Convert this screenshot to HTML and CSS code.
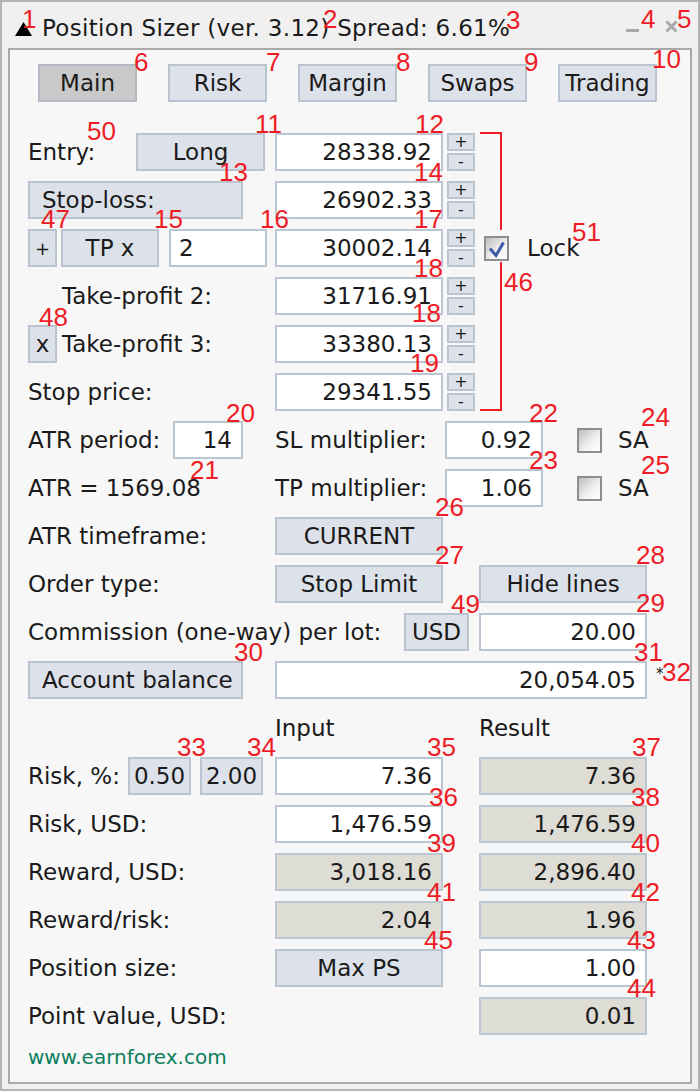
FILE: index.html
```html
<!DOCTYPE html>
<html lang="en">

<head>
    <meta charset="UTF-8">
    <meta name="viewport" content="width=device-width, initial-scale=1.0">
    <title>Position Sizer</title>
    <link rel="stylesheet" href="styles.css">
</head>

<body>

    <div class="window">
        <div class="titlebar">
            <svg class="tri" width="17" height="14" viewBox="0 0 17 14"><polygon points="8.5,0 17,14 0,14" fill="#000"/></svg>
            <span class="title">Position Sizer (ver. 3.12) Spread: 6.61%</span>
            <svg class="min" width="13" height="3"><rect width="13" height="3" fill="#a8a8a8"/></svg>
            <svg class="close" width="13" height="13" viewBox="0 0 13 13"><path d="M1.5 1.5 L11.5 11.5 M11.5 1.5 L1.5 11.5" stroke="#a8a8a8" stroke-width="3"/></svg>
        </div>

        <div class="panel">
            <div class="tabs">
                <button class="tab active">Main</button>
                <button class="tab">Risk</button>
                <button class="tab">Margin</button>
                <button class="tab">Swaps</button>
                <button class="tab">Trading</button>
            </div>

            <div class="row">
                <div class="lc"><span class="lbl">Entry:</span><button class="btn long">Long</button></div>
                <input class="inp fld" value="28338.92">
                <div class="spin"><button>+</button><button>-</button></div>
            </div>

            <div class="row">
                <div class="lc"><button class="btn sl">Stop-loss:</button></div>
                <input class="inp fld" value="26902.33">
                <div class="spin"><button>+</button><button>-</button></div>
            </div>

            <div class="row">
                <div class="lc">
                    <button class="btn sq plus">+</button>
                    <button class="btn tpx">TP x</button>
                    <input class="inp mult" value="2">
                </div>
                <input class="inp fld" value="30002.14">
                <div class="spin"><button>+</button><button>-</button></div>
                <div class="lock">
                    <span class="chk"><svg width="21" height="21" viewBox="0 0 21 21"><path d="M4 10.5 L10 17.5 L17.5 4.5" stroke="#3d5bab" stroke-width="3" fill="none"/></svg></span>
                    <span class="lbl">Lock</span>
                </div>
            </div>

            <div class="row">
                <div class="lc"><span class="lbl ind">Take-profit 2:</span></div>
                <input class="inp fld" value="31716.91">
                <div class="spin"><button>+</button><button>-</button></div>
            </div>

            <div class="row">
                <div class="lc"><button class="btn sq">x</button><span class="lbl tp3">Take-profit 3:</span></div>
                <input class="inp fld" value="33380.13">
                <div class="spin"><button>+</button><button>-</button></div>
            </div>

            <div class="row">
                <div class="lc"><span class="lbl">Stop price:</span></div>
                <input class="inp fld" value="29341.55">
                <div class="spin"><button>+</button><button>-</button></div>
            </div>

            <div class="row">
                <div class="lc"><span class="lbl">ATR period:</span><input class="inp atr" value="14"></div>
                <span class="lbl mlbl">SL multiplier:</span>
                <input class="inp small" value="0.92">
                <span class="chk sa"></span><span class="lbl satxt">SA</span>
            </div>

            <div class="row">
                <div class="lc"><span class="lbl">ATR = 1569.08</span></div>
                <span class="lbl mlbl">TP multiplier:</span>
                <input class="inp small" value="1.06">
                <span class="chk sa"></span><span class="lbl satxt">SA</span>
            </div>

            <div class="row">
                <div class="lc"><span class="lbl">ATR timeframe:</span></div>
                <button class="btn fld">CURRENT</button>
            </div>

            <div class="row">
                <div class="lc"><span class="lbl">Order type:</span></div>
                <button class="btn fld">Stop Limit</button>
                <button class="btn rc">Hide lines</button>
            </div>

            <div class="row">
                <div class="lcw"><span class="lbl">Commission (one-way) per lot:</span><button class="btn usd">USD</button></div>
                <input class="inp rc" value="20.00">
            </div>

            <div class="row">
                <div class="lc"><button class="btn sl">Account balance</button></div>
                <input class="inp wide" value="20,054.05">
                <span class="star">*</span>
            </div>

            <div class="row">
                <span class="colh first">Input</span>
                <span class="colh">Result</span>
            </div>

            <div class="row">
                <div class="lc">
                    <span class="lbl">Risk, %:</span>
                    <button class="btn q">0.50</button>
                    <button class="btn q">2.00</button>
                </div>
                <input class="inp fld" value="7.36">
                <input class="inp rc ro" value="7.36" readonly>
            </div>

            <div class="row">
                <div class="lc"><span class="lbl">Risk, USD:</span></div>
                <input class="inp fld" value="1,476.59">
                <input class="inp rc ro" value="1,476.59" readonly>
            </div>

            <div class="row">
                <div class="lc"><span class="lbl">Reward, USD:</span></div>
                <input class="inp fld ro" value="3,018.16" readonly>
                <input class="inp rc ro" value="2,896.40" readonly>
            </div>

            <div class="row">
                <div class="lc"><span class="lbl">Reward/risk:</span></div>
                <input class="inp fld ro" value="2.04" readonly>
                <input class="inp rc ro" value="1.96" readonly>
            </div>

            <div class="row">
                <div class="lc"><span class="lbl">Position size:</span></div>
                <button class="btn fld">Max PS</button>
                <input class="inp rc" value="1.00">
            </div>

            <div class="row">
                <div class="lc"><span class="lbl">Point value, USD:</span></div>
                <span class="fld"></span>
                <input class="inp rc ro" value="0.01" readonly>
            </div>

            <div class="site">www.earnforex.com</div>
        </div>

        <!-- red callout numbers drawn over the panel -->
        <div class="notes">
            <svg class="bracket" width="26" height="283" viewBox="0 0 26 283">
                <path d="M2 3 H23 V100 M23 132 V280 H2" stroke="#ee1c25" stroke-width="2" fill="none"/>
            </svg>
            <span class="n n1">1</span><span class="n n2">2</span><span class="n n3">3</span>
            <span class="n n4">4</span><span class="n n5">5</span><span class="n n6">6</span>
            <span class="n n7">7</span><span class="n n8">8</span><span class="n n9">9</span>
            <span class="n n10">10</span><span class="n n11">11</span><span class="n n50">50</span>
            <span class="n n12">12</span><span class="n n13">13</span><span class="n n14">14</span>
            <span class="n n47">47</span><span class="n n15">15</span><span class="n n16">16</span>
            <span class="n n17">17</span><span class="n n51">51</span><span class="n n46">46</span>
            <span class="n n18a">18</span><span class="n n18b">18</span><span class="n n48">48</span>
            <span class="n n19">19</span><span class="n n20">20</span><span class="n n21">21</span>
            <span class="n n22">22</span><span class="n n24">24</span><span class="n n23">23</span>
            <span class="n n25">25</span><span class="n n26">26</span><span class="n n27">27</span>
            <span class="n n28">28</span><span class="n n49">49</span><span class="n n29">29</span>
            <span class="n n31">31</span><span class="n n32">32</span><span class="n n30">30</span>
            <span class="n n33">33</span><span class="n n34">34</span><span class="n n35">35</span>
            <span class="n n37">37</span><span class="n n36">36</span><span class="n n38">38</span>
            <span class="n n39">39</span><span class="n n40">40</span><span class="n n41">41</span>
            <span class="n n42">42</span><span class="n n45">45</span><span class="n n43">43</span>
            <span class="n n44">44</span>
        </div>
    </div>

</body>

</html>
```

FILE: styles.css
```css
* {
    box-sizing: border-box;
}

body {
    margin: 0;
    background-color: #fff;
    font-family: "DejaVu Sans", Verdana, sans-serif;
    font-size: 23px;
    color: #1a1a1a;
}

.window {
    position: relative;
    width: 700px;
    height: 1091px;
    border: 2px solid #b4b4b4;
    background-color: #f0f0f0;
    padding: 0 6px 5px 6px;
    display: flex;
    flex-direction: column;
}

/* title bar */
.titlebar {
    height: 46px;
    flex: none;
    display: flex;
    align-items: center;
    padding-top: 5px;
}

.tri {
    margin-left: 7px;
    margin-top: 3px;
}

.title {
    margin-left: 10px;
    line-height: 26px;
    letter-spacing: 0.3px;
    white-space: nowrap;
}

.min {
    margin-left: auto;
    margin-top: 6px;
}

.close {
    margin-left: 26px;
    margin-right: 14px;
    margin-top: -2px;
}

/* main panel */
.panel {
    flex: 1;
    border: 2px solid #a9a9a9;
    background-color: #f7f7f7;
    padding: 14px 0 0 18px;
}

.tabs {
    display: flex;
    gap: 31px;
    margin-left: 10px;
    margin-bottom: 31px;
}

button {
    font: inherit;
    color: inherit;
    background-color: #dde2ea;
    border: 2px solid #bac4d0;
    padding: 0;
    cursor: pointer;
}

.tab {
    width: 99px;
    height: 38px;
}

.tab.active {
    background-color: #c9c9c9;
    border-color: #b3bac3;
}

.row {
    display: flex;
    align-items: center;
    height: 38px;
    margin-bottom: 10px;
}

.lc {
    width: 247px;
    height: 100%;
    flex: none;
    display: flex;
    align-items: center;
}

.lcw {
    width: 441px;
    height: 100%;
    flex: none;
    display: flex;
    align-items: center;
}

.lbl {
    white-space: nowrap;
}

.btn {
    height: 38px;
    white-space: nowrap;
}

.inp {
    font: inherit;
    color: inherit;
    height: 38px;
    border: 2px solid #bcc6d2;
    background-color: #fff;
    text-align: right;
    padding: 0 9px 0 4px;
    outline: none;
}

.inp.ro {
    background-color: #dddcd5;
}

.fld {
    width: 168px;
    flex: none;
}

.rc {
    width: 168px;
    flex: none;
    margin-left: 36px;
}

.lcw + .rc {
    margin-left: 10px;
}

.spin {
    display: flex;
    flex-direction: column;
    gap: 2px;
    width: 28px;
    margin-left: 4px;
}

.spin button {
    height: 18px;
    font-size: 16px;
    line-height: 12px;
}

.long {
    width: 129px;
    margin-left: auto;
    margin-right: 10px;
}

.sl {
    width: 215px;
    text-align: left;
    padding-left: 12px;
}

.sq {
    width: 29px;
}

.sq.plus {
    font-size: 18px;
}

.tpx {
    width: 98px;
    margin-left: 4px;
}

.mult {
    width: 98px;
    margin-left: 10px;
    text-align: left;
    padding-left: 8px;
}

.ind {
    padding-left: 34px;
}

.tp3 {
    margin-left: 5px;
}

.lock {
    display: flex;
    align-items: center;
    margin-left: 9px;
}

.lock .lbl {
    margin-left: 18px;
}

.chk {
    width: 25px;
    height: 25px;
    flex: none;
    display: inline-flex;
    border: 2px solid #8e8e8e;
    background: linear-gradient(135deg, #bebebe 0%, #f2f2f2 60%, #fff 100%);
}

.atr {
    width: 70px;
    margin-left: auto;
    margin-right: 32px;
}

.mlbl {
    width: 170px;
}

.small {
    width: 98px;
}

.sa {
    margin-left: 34px;
}

.satxt {
    margin-left: 16px;
}

.usd {
    width: 65px;
    margin-left: auto;
}

.wide {
    width: 372px;
}

.star {
    align-self: flex-start;
    font-size: 15px;
    margin-left: 9px;
    margin-top: 4px;
}

.colh {
    width: 168px;
    margin-left: 36px;
}

.colh.first {
    margin-left: 247px;
}

.q {
    width: 63px;
}

.q:first-of-type {
    margin-left: auto;
}

.q + .q {
    margin-left: 9px;
    margin-right: 12px;
}

.site {
    margin-top: 4px;
    font-size: 20px;
    line-height: 24px;
    color: #0b7e5d;
}

/* callout layer */
.notes {
    position: absolute;
    left: -2px;
    top: -2px;
    width: 700px;
    height: 1092px;
    pointer-events: none;
}

.bracket {
    position: absolute;
    left: 478px;
    top: 130px;
}

.n {
    position: absolute;
    font-family: "Liberation Sans", Arial, sans-serif;
    font-size: 26px;
    line-height: 26px;
    color: #ee1c25;
}

.n1 { left: 22px; top: 6px; }
.n2 { left: 323px; top: 6px; }
.n3 { left: 506px; top: 7px; }
.n4 { left: 641px; top: 6px; }
.n5 { left: 677px; top: 6px; }
.n6 { left: 134px; top: 49px; }
.n7 { left: 266px; top: 49px; }
.n8 { left: 396px; top: 49px; }
.n9 { left: 524px; top: 49px; }
.n10 { left: 652px; top: 46px; }
.n11 { left: 255px; top: 111px; }
.n50 { left: 87px; top: 118px; }
.n12 { left: 415px; top: 111px; }
.n13 { left: 219px; top: 159px; }
.n14 { left: 414px; top: 159px; }
.n47 { left: 41px; top: 206px; }
.n15 { left: 154px; top: 206px; }
.n16 { left: 260px; top: 206px; }
.n17 { left: 414px; top: 206px; }
.n51 { left: 572px; top: 219px; }
.n46 { left: 504px; top: 269px; }
.n18a { left: 414px; top: 255px; }
.n18b { left: 412px; top: 300px; }
.n48 { left: 39px; top: 304px; }
.n19 { left: 410px; top: 350px; }
.n20 { left: 226px; top: 400px; }
.n21 { left: 190px; top: 457px; }
.n22 { left: 529px; top: 400px; }
.n24 { left: 641px; top: 404px; }
.n23 { left: 529px; top: 447px; }
.n25 { left: 641px; top: 452px; }
.n26 { left: 435px; top: 494px; }
.n27 { left: 435px; top: 542px; }
.n28 { left: 636px; top: 542px; }
.n49 { left: 451px; top: 591px; }
.n29 { left: 636px; top: 590px; }
.n31 { left: 634px; top: 639px; }
.n32 { left: 662px; top: 659px; }
.n30 { left: 234px; top: 639px; }
.n33 { left: 177px; top: 734px; }
.n34 { left: 247px; top: 734px; }
.n35 { left: 427px; top: 734px; }
.n37 { left: 632px; top: 734px; }
.n36 { left: 429px; top: 784px; }
.n38 { left: 631px; top: 784px; }
.n39 { left: 427px; top: 830px; }
.n40 { left: 631px; top: 830px; }
.n41 { left: 427px; top: 879px; }
.n42 { left: 631px; top: 879px; }
.n45 { left: 424px; top: 927px; }
.n43 { left: 627px; top: 927px; }
.n44 { left: 627px; top: 975px; }
```
